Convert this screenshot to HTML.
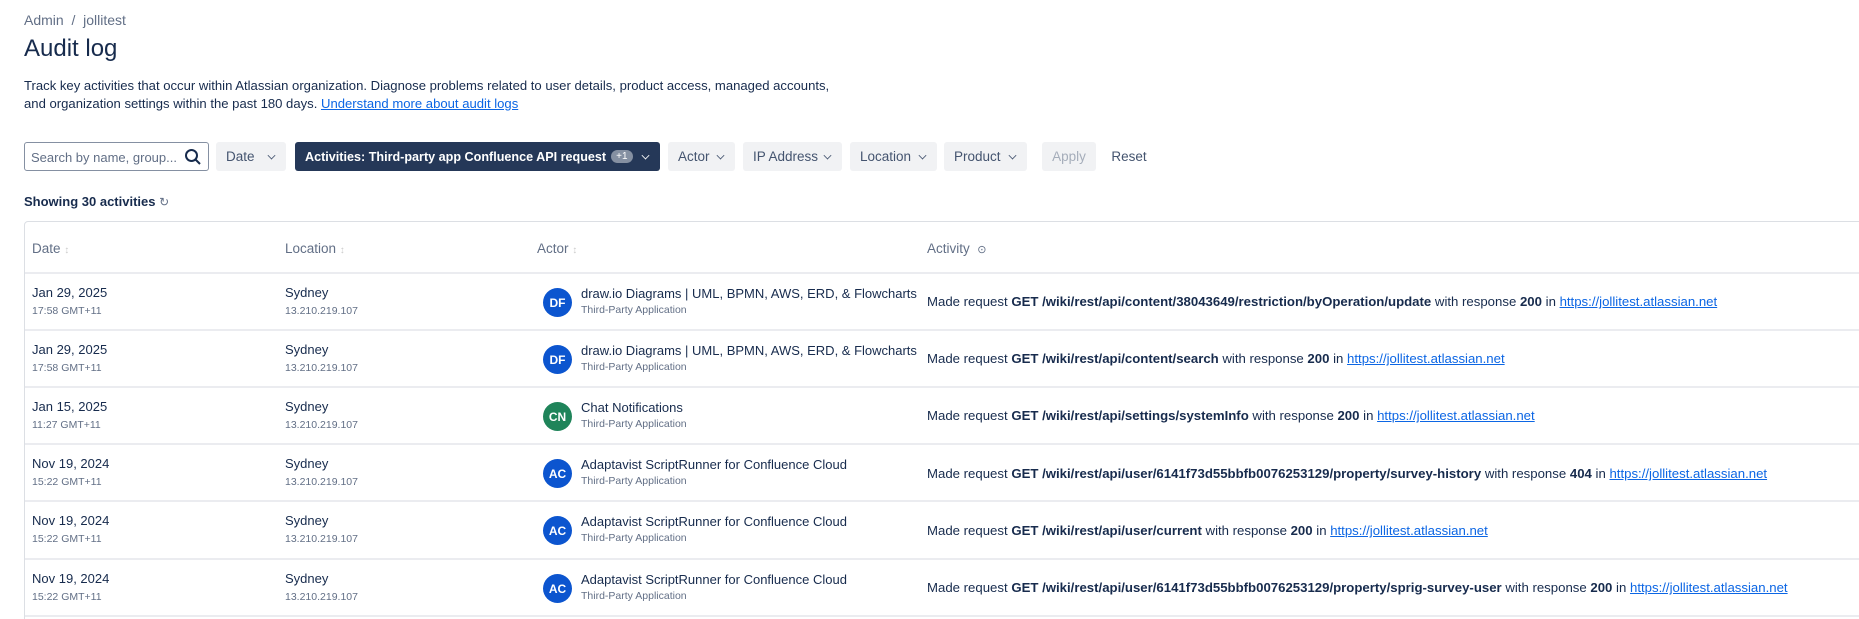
<!DOCTYPE html>
<html style="overflow:hidden;width:1859px;height:619px"><head><meta charset="utf-8"><style>
*{box-sizing:border-box;margin:0;padding:0}
body{width:1859px;height:619px;overflow:hidden;background:#fff;font-family:"Liberation Sans",Arial,sans-serif;color:#172b4d;position:relative}
.a{position:absolute;white-space:nowrap}
.crumb{left:24px;top:12px;font-size:14px;color:#626f86}
.title{left:24px;top:35px;font-size:24px;font-weight:500;color:#172b4d}
.desc{left:24px;top:77px;font-size:13.1px;line-height:18px;color:#172b4d}
a{color:#0c66e4;text-decoration:underline}
.btn{position:absolute;top:142px;height:29px;border-radius:3px;background:#f1f2f4;font-size:13.5px;color:#44546f;display:flex;align-items:center;padding-left:10px;white-space:nowrap;overflow:hidden}
.chev{position:absolute;right:11px;top:10px;width:7px;height:7px;border-right:1.8px solid currentColor;border-bottom:1.8px solid currentColor;transform:rotate(45deg) scale(.8)}
.search{position:absolute;left:24px;top:142px;width:185px;height:29px;border:1px solid #8590a2;border-radius:3px;font-size:13px;color:#626f86;padding:7px 0 0 6px;white-space:nowrap;overflow:hidden}
.tbl{position:absolute;left:24px;top:221px;width:1860px;height:420px;border:1px solid #dcdfe4;border-radius:4px}
.hl{position:absolute;left:25px;width:1840px;height:2px;background:#ebecf0}
.hd{font-size:13.5px;color:#626f86;top:241px}
.t1{font-size:13px;color:#172b4d}
.t2{font-size:10.5px;color:#626f86}
.av{position:absolute;left:543px;width:29px;height:29px;border-radius:50%;background:#0c55cf;color:#fff;font-size:12px;font-weight:bold;display:flex;align-items:center;justify-content:center}
.act{font-size:13.2px;color:#172b4d;left:927px}
.act b{font-weight:bold}
</style></head><body>
<div class="a crumb">Admin &nbsp;/&nbsp; jollitest</div>
<div class="a title">Audit log</div>
<div class="a desc">Track key activities that occur within Atlassian organization. Diagnose problems related to user details, product access, managed accounts,<br>and organization settings within the past 180 days. <a>Understand more about audit logs</a></div>

<div class="search">Search by name, group...
<svg style="position:absolute;right:6px;top:5px;background:#fff" width="18" height="18" viewBox="0 0 18 18"><circle cx="7.5" cy="7.5" r="5.5" fill="none" stroke="#172b4d" stroke-width="2"/><path d="M11.5 11.5L16 16" stroke="#172b4d" stroke-width="2"/></svg></div>
<div class="btn" style="left:216px;width:70px">Date<span class="chev"></span></div>
<div class="btn" style="left:295px;width:365px;background:#253858;color:#fff;font-weight:bold;font-size:12.6px">Activities: Third-party app Confluence API request<span style="margin-left:5px;background:#8590a2;border-radius:8px;font-size:10px;padding:1px 5px;font-weight:normal;color:#fff">+1</span><span class="chev"></span></div>
<div class="btn" style="left:668px;width:67px">Actor<span class="chev"></span></div>
<div class="btn" style="left:743px;width:99px">IP Address<span class="chev"></span></div>
<div class="btn" style="left:850px;width:87px">Location<span class="chev"></span></div>
<div class="btn" style="left:944px;width:83px">Product<span class="chev"></span></div>
<div class="btn" style="left:1042px;width:54px;color:#a5adba;justify-content:center;padding:0">Apply</div>
<div class="btn" style="left:1102px;width:54px;background:none;justify-content:center;padding:0">Reset</div>

<div class="a" style="left:24px;top:194px;font-size:13px;font-weight:bold">Showing 30 activities <span style="font-weight:normal;color:#626f86;font-size:12px">&#x21bb;</span></div>

<div class="tbl"></div>
<div class="a hd" style="left:32px">Date <span style="color:#ccc;font-size:10px">&#x2195;</span></div>
<div class="a hd" style="left:285px">Location <span style="color:#ccc;font-size:10px">&#x2195;</span></div>
<div class="a hd" style="left:537px">Actor <span style="color:#ccc;font-size:10px">&#x2195;</span></div>
<div class="a hd" style="left:927px">Activity &nbsp;<span style="font-size:11px">&#x2299;</span></div>
<div class="hl" style="top:272px"></div>
<div class="hl" style="top:329px"></div>
<div class="hl" style="top:386px"></div>
<div class="hl" style="top:443px"></div>
<div class="hl" style="top:500px"></div>
<div class="hl" style="top:558px"></div>
<div class="hl" style="top:615px"></div>

<div class="a t1" style="left:32px;top:285px">Jan 29, 2025</div><div class="a t2" style="left:32px;top:305px">17:58 GMT+11</div>
<div class="a t1" style="left:285px;top:285px">Sydney</div><div class="a t2" style="left:285px;top:305px">13.210.219.107</div>
<div class="av" style="top:288px">DF</div>
<div class="a t1" style="left:581px;top:286px">draw.io Diagrams | UML, BPMN, AWS, ERD, &amp; Flowcharts</div><div class="a t2" style="left:581px;top:304px">Third-Party Application</div>
<div class="a act" style="top:294px">Made request <b>GET /wiki/rest/api/content/38043649/restriction/byOperation/update</b> with response <b>200</b> in <a>https://jollitest.atlassian.net</a></div>

<div class="a t1" style="left:32px;top:342px">Jan 29, 2025</div><div class="a t2" style="left:32px;top:362px">17:58 GMT+11</div>
<div class="a t1" style="left:285px;top:342px">Sydney</div><div class="a t2" style="left:285px;top:362px">13.210.219.107</div>
<div class="av" style="top:345px">DF</div>
<div class="a t1" style="left:581px;top:343px">draw.io Diagrams | UML, BPMN, AWS, ERD, &amp; Flowcharts</div><div class="a t2" style="left:581px;top:361px">Third-Party Application</div>
<div class="a act" style="top:351px">Made request <b>GET /wiki/rest/api/content/search</b> with response <b>200</b> in <a>https://jollitest.atlassian.net</a></div>

<div class="a t1" style="left:32px;top:399px">Jan 15, 2025</div><div class="a t2" style="left:32px;top:419px">11:27 GMT+11</div>
<div class="a t1" style="left:285px;top:399px">Sydney</div><div class="a t2" style="left:285px;top:419px">13.210.219.107</div>
<div class="av" style="top:402px;background:#1f845a">CN</div>
<div class="a t1" style="left:581px;top:400px">Chat Notifications</div><div class="a t2" style="left:581px;top:418px">Third-Party Application</div>
<div class="a act" style="top:408px">Made request <b>GET /wiki/rest/api/settings/systemInfo</b> with response <b>200</b> in <a>https://jollitest.atlassian.net</a></div>

<div class="a t1" style="left:32px;top:456px">Nov 19, 2024</div><div class="a t2" style="left:32px;top:476px">15:22 GMT+11</div>
<div class="a t1" style="left:285px;top:456px">Sydney</div><div class="a t2" style="left:285px;top:476px">13.210.219.107</div>
<div class="av" style="top:459px">AC</div>
<div class="a t1" style="left:581px;top:457px">Adaptavist ScriptRunner for Confluence Cloud</div><div class="a t2" style="left:581px;top:475px">Third-Party Application</div>
<div class="a act" style="top:466px">Made request <b>GET /wiki/rest/api/user/6141f73d55bbfb0076253129/property/survey-history</b> with response <b>404</b> in <a>https://jollitest.atlassian.net</a></div>

<div class="a t1" style="left:32px;top:513px">Nov 19, 2024</div><div class="a t2" style="left:32px;top:533px">15:22 GMT+11</div>
<div class="a t1" style="left:285px;top:513px">Sydney</div><div class="a t2" style="left:285px;top:533px">13.210.219.107</div>
<div class="av" style="top:516px">AC</div>
<div class="a t1" style="left:581px;top:514px">Adaptavist ScriptRunner for Confluence Cloud</div><div class="a t2" style="left:581px;top:532px">Third-Party Application</div>
<div class="a act" style="top:523px">Made request <b>GET /wiki/rest/api/user/current</b> with response <b>200</b> in <a>https://jollitest.atlassian.net</a></div>

<div class="a t1" style="left:32px;top:571px">Nov 19, 2024</div><div class="a t2" style="left:32px;top:591px">15:22 GMT+11</div>
<div class="a t1" style="left:285px;top:571px">Sydney</div><div class="a t2" style="left:285px;top:591px">13.210.219.107</div>
<div class="av" style="top:574px">AC</div>
<div class="a t1" style="left:581px;top:572px">Adaptavist ScriptRunner for Confluence Cloud</div><div class="a t2" style="left:581px;top:590px">Third-Party Application</div>
<div class="a act" style="top:580px">Made request <b>GET /wiki/rest/api/user/6141f73d55bbfb0076253129/property/sprig-survey-user</b> with response <b>200</b> in <a>https://jollitest.atlassian.net</a></div>
</body></html>
